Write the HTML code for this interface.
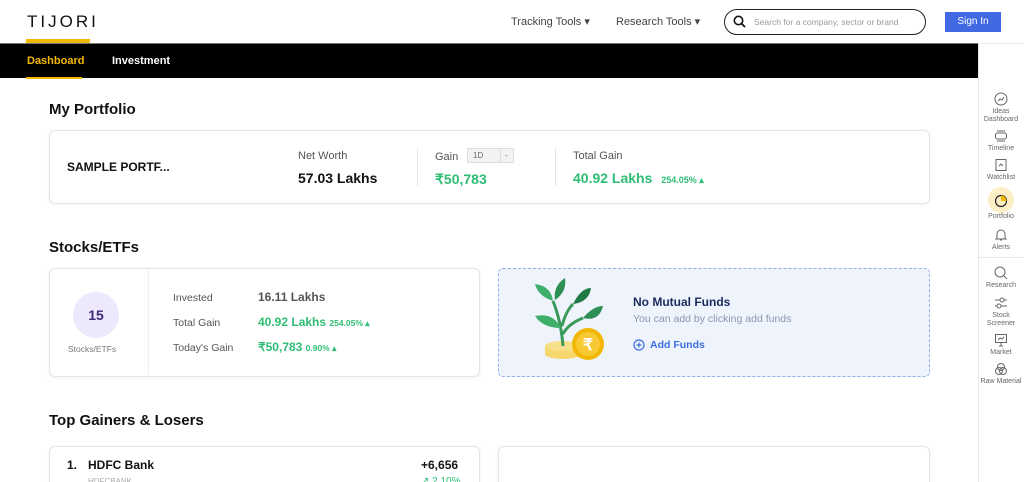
<!DOCTYPE html>
<html><head><style>
*{margin:0;padding:0;box-sizing:border-box}
html,body{width:1024px;height:482px;overflow:hidden}
body{background:#fff;font-family:"Liberation Sans",sans-serif;position:relative;color:#111}
.abs{position:absolute}
.card{position:absolute;background:#fff;border:1px solid #e4e4e4;border-radius:6px;box-shadow:0 1px 4px rgba(0,0,0,.06)}
.g{color:#2ebd74}
.sb{position:absolute;left:978px;width:46px;text-align:center;font-size:7px;color:#666;line-height:8px}
.sb svg{display:block;margin:0 auto 2px}
</style></head><body>
<div class="abs" style="left:27px;top:12px;font-size:17px;letter-spacing:3px;color:#111">TIJORI</div>
<div class="abs" style="left:26px;top:39px;width:64px;height:4px;background:#f5b800"></div>
<div class="abs" style="left:511px;top:15px;font-size:11px;color:#444">Tracking Tools &#9662;</div>
<div class="abs" style="left:616px;top:15px;font-size:11px;color:#444">Research Tools &#9662;</div>
<div class="abs" style="left:724px;top:9px;width:202px;height:26px;border:1px solid #222;border-radius:13px"></div>
<svg class="abs" style="left:733px;top:15px" width="13" height="13" viewBox="0 0 13 13"><circle cx="5.5" cy="5.5" r="4.2" fill="none" stroke="#111" stroke-width="1.6"/><path d="M8.6 8.6L12 12" stroke="#111" stroke-width="1.8"/></svg>
<div class="abs" style="left:754px;top:17px;font-size:8.5px;color:#999;white-space:nowrap">Search for a company, sector or brand</div>
<div class="abs" style="left:945px;top:12px;width:56px;height:20px;background:#4169e1;color:#fff;font-size:10px;text-align:center;line-height:20px">Sign In</div>
<div class="abs" style="left:0;top:43px;width:978px;height:35px;background:#000"></div>
<div class="abs" style="left:0;top:43px;width:978px;height:1px;background:#777"></div>
<div class="abs" style="left:978px;top:43px;width:46px;height:1px;background:#eee"></div>
<div class="abs" style="left:27px;top:55px;font-size:11px;font-weight:bold;color:#f5b800">Dashboard</div>
<div class="abs" style="left:26px;top:77px;width:56px;height:2px;background:#f5b800"></div>
<div class="abs" style="left:112px;top:55px;font-size:11px;font-weight:bold;color:#fff">Investment</div>
<div class="abs" style="left:978px;top:44px;width:1px;height:438px;background:#e6e6e6"></div>

<div class="abs" style="left:49px;top:101px;font-size:15px;font-weight:bold">My Portfolio</div>
<div class="card" style="left:49px;top:130px;width:881px;height:74px"></div>
<div class="abs" style="left:67px;top:160px;font-size:12px;font-weight:bold">SAMPLE PORTF...</div>
<div class="abs" style="left:298px;top:150px;font-size:11px;color:#555">Net Worth</div>
<div class="abs" style="left:298px;top:170px;font-size:14px;font-weight:bold">57.03 Lakhs</div>
<div class="abs" style="left:417px;top:148px;width:1px;height:38px;background:#e4e4e4"></div>
<div class="abs" style="left:435px;top:151px;font-size:11px;color:#555">Gain</div>
<div class="abs" style="left:467px;top:148px;width:47px;height:15px;border:1px solid #ddd;background:#f2f2f2;font-size:8px;color:#666;line-height:13px;padding-left:5px">1D<span style="position:absolute;left:32px;top:0;border-left:1px solid #ddd;padding-left:4px;height:13px">-</span></div>
<div class="abs g" style="left:435px;top:171px;font-size:14px;font-weight:bold">₹50,783</div>
<div class="abs" style="left:555px;top:148px;width:1px;height:38px;background:#e4e4e4"></div>
<div class="abs" style="left:573px;top:150px;font-size:11px;color:#555">Total Gain</div>
<div class="abs g" style="left:573px;top:170px;font-size:14px;font-weight:bold">40.92 Lakhs <span style="font-size:9px;margin-left:5px">254.05% ▴</span></div>

<div class="abs" style="left:49px;top:239px;font-size:15px;font-weight:bold">Stocks/ETFs</div>
<div class="card" style="left:49px;top:268px;width:431px;height:109px"></div>
<div class="abs" style="left:73px;top:292px;width:46px;height:46px;border-radius:50%;background:#ede8fb;color:#3b2a7a;font-size:14px;font-weight:bold;text-align:center;line-height:46px">15</div>
<div class="abs" style="left:68px;top:344px;font-size:8.5px;color:#777">Stocks/ETFs</div>
<div class="abs" style="left:148px;top:270px;width:1px;height:105px;background:#eee"></div>
<div class="abs" style="left:173px;top:292px;font-size:10.5px;color:#555">Invested</div>
<div class="abs" style="left:258px;top:290px;font-size:12px;font-weight:bold;color:#555">16.11 Lakhs</div>
<div class="abs" style="left:173px;top:317px;font-size:10.5px;color:#555">Total Gain</div>
<div class="abs g" style="left:258px;top:315px;font-size:12px;font-weight:bold">40.92 Lakhs <span style="font-size:8.5px">254.05% ▴</span></div>
<div class="abs" style="left:173px;top:342px;font-size:10.5px;color:#555">Today's Gain</div>
<div class="abs g" style="left:258px;top:340px;font-size:12px;font-weight:bold">₹50,783 <span style="font-size:8.5px">0.90% ▴</span></div>

<div class="abs" style="left:498px;top:268px;width:432px;height:109px;border:1px dashed #8fb0ea;border-radius:5px;background:#eef3fc"></div>
<svg class="abs" style="left:533px;top:276px" width="75" height="88" viewBox="0 0 75 88">
<ellipse cx="30" cy="78" rx="18" ry="5" fill="#f5d76e"/><rect x="12" y="70" width="36" height="8" fill="#f5d76e"/><ellipse cx="30" cy="70" rx="18" ry="5" fill="#f8e08a"/>
<path d="M30 70 Q28 45 20 25 M29 50 Q33 35 40 28 M30 58 Q35 48 50 42" stroke="#3a9a5a" stroke-width="3" fill="none"/>
<path d="M20 25 Q5 20 2 8 Q18 10 20 25Z" fill="#3fae6a"/><path d="M22 24 Q20 10 32 2 Q34 16 22 24Z" fill="#2e8f55"/>
<path d="M28 52 Q10 52 2 40 Q20 36 28 52Z" fill="#3fae6a"/><path d="M40 28 Q48 12 58 12 Q56 26 40 28Z" fill="#1f7a45"/>
<path d="M50 42 Q60 30 70 30 Q66 46 50 42Z" fill="#2e8f55"/>
<circle cx="55" cy="68" r="16" fill="#f2b705"/><circle cx="55" cy="68" r="12" fill="#f7c933"/><text x="55" y="74" font-size="16" font-weight="bold" fill="#fff" text-anchor="middle" font-family="Liberation Sans">₹</text></svg>
<div class="abs" style="left:633px;top:295px;font-size:12px;font-weight:bold;color:#1a2b5c">No Mutual Funds</div>
<div class="abs" style="left:633px;top:313px;font-size:10.5px;color:#8a97ad">You can add by clicking add funds</div>
<svg class="abs" style="left:633px;top:339px" width="12" height="12" viewBox="0 0 12 12"><circle cx="6" cy="6" r="5" fill="none" stroke="#3b6fe0" stroke-width="1.2"/><path d="M6 3.5v5M3.5 6h5" stroke="#3b6fe0" stroke-width="1.2"/></svg>
<div class="abs" style="left:650px;top:339px;font-size:10.5px;font-weight:bold;color:#3b6fe0">Add Funds</div>

<div class="abs" style="left:49px;top:412px;font-size:15px;font-weight:bold">Top Gainers &amp; Losers</div>
<div class="card" style="left:49px;top:446px;width:431px;height:60px"></div>
<div class="card" style="left:498px;top:446px;width:432px;height:60px"></div>
<div class="abs" style="left:67px;top:458px;font-size:12px;font-weight:bold">1.</div>
<div class="abs" style="left:88px;top:458px;font-size:12px;font-weight:bold">HDFC Bank</div>
<div class="abs" style="left:421px;top:458px;font-size:12px;font-weight:bold">+6,656</div>
<div class="abs" style="left:88px;top:477px;font-size:8px;color:#aaa">HDFCBANK</div>
<div class="abs g" style="left:421px;top:476px;font-size:10px">↗ 2.10%</div>

<div class="sb" style="top:92px"><svg width="14" height="14" viewBox="0 0 14 14"><circle cx="7" cy="7" r="6" fill="none" stroke="#666"/><path d="M4 9l2-2 2 1 2-3" stroke="#666" fill="none"/></svg>Ideas<br>Dashboard</div>
<div class="sb" style="top:129px"><svg width="14" height="14" viewBox="0 0 14 14"><rect x="1.5" y="4" width="11" height="6" rx="2" fill="none" stroke="#666"/><path d="M3 2h8M3 12h8" stroke="#666"/></svg>Timeline</div>
<div class="sb" style="top:158px"><svg width="14" height="14" viewBox="0 0 14 14"><rect x="2" y="1.5" width="10" height="11" fill="none" stroke="#666"/><path d="M5 8l2-2 2 2" stroke="#666" fill="none"/></svg>Watchlist</div>
<div class="abs" style="left:988px;top:187px;width:26px;height:26px;border-radius:50%;background:#fdf0c8"></div>
<div class="sb" style="top:194px"><svg width="14" height="14" viewBox="0 0 14 14"><circle cx="7" cy="7" r="5.5" fill="none" stroke="#222" stroke-width="1.2"/><path d="M7 1.5A5.5 5.5 0 0 1 12.5 7H7Z" fill="#f5b800"/></svg><span style="position:relative;top:3px">Portfolio</span></div>
<div class="sb" style="top:228px"><svg width="14" height="14" viewBox="0 0 14 14"><path d="M3 10V6a4 4 0 0 1 8 0v4l1 1H2Z M6 12h2" fill="none" stroke="#666"/></svg>Alerts</div>
<div class="abs" style="left:979px;top:257px;width:45px;height:1px;background:#e6e6e6"></div>
<div class="sb" style="top:266px"><svg width="14" height="14" viewBox="0 0 14 14"><circle cx="6" cy="6" r="5" fill="none" stroke="#666"/><path d="M10 10l3 3" stroke="#666"/></svg>Research</div>
<div class="sb" style="top:296px"><svg width="14" height="14" viewBox="0 0 14 14"><path d="M1 4h12M1 10h12" stroke="#666"/><circle cx="8" cy="4" r="2" fill="#fff" stroke="#666"/><circle cx="5" cy="10" r="2" fill="#fff" stroke="#666"/></svg>Stock<br>Screener</div>
<div class="sb" style="top:333px"><svg width="14" height="14" viewBox="0 0 14 14"><rect x="1.5" y="1.5" width="11" height="8" fill="none" stroke="#666"/><path d="M4 7l2-2 2 1 2-2M7 10v3M5 13h4" stroke="#666" fill="none"/></svg>Market</div>
<div class="sb" style="top:362px"><svg width="14" height="14" viewBox="0 0 14 14"><circle cx="7" cy="5" r="3.5" fill="none" stroke="#666"/><circle cx="5" cy="9" r="3.5" fill="none" stroke="#666"/><circle cx="9" cy="9" r="3.5" fill="none" stroke="#666"/></svg>Raw Material</div>
</body></html>
